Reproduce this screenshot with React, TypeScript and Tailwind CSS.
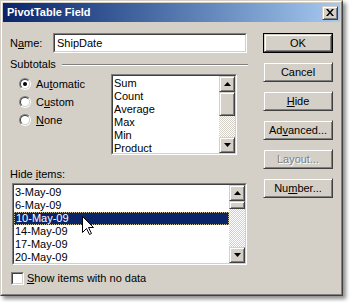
import type { ReactNode } from "react";

const raised =
  "border border-t-[#d4d0c8] border-l-[#d4d0c8] border-r-[#404040] border-b-[#404040] shadow-[inset_1px_1px_0_#ffffff,inset_-1px_-1px_0_#808080]";

function U({ children }: { children: ReactNode }) {
  return <span className="underline underline-offset-[1px]">{children}</span>;
}

function Btn({ children, def, disabled }: { children: ReactNode; def?: boolean; disabled?: boolean }) {
  const inner = (
    <div
      className={`flex h-full w-full items-center justify-center bg-[#d4d0c8] ${raised} ${
        disabled ? "text-[#808080] [text-shadow:1px_1px_0_#ffffff]" : "text-black"
      }`}
    >
      {children}
    </div>
  );
  if (def) return <div className="h-[20px] w-[70px] border border-black">{inner}</div>;
  return <div className="h-[20px] w-[70px]">{inner}</div>;
}

function Arrow({ up }: { up?: boolean }) {
  return (
    <div className={`flex h-[16px] w-[16px] items-center justify-center bg-[#d4d0c8] ${raised}`}>
      <svg width="7" height="4" viewBox="0 0 7 4">
        {up ? <path d="M3.5 0 L7 4 L0 4 Z" fill="#000" /> : <path d="M0 0 L7 0 L3.5 4 Z" fill="#000" />}
      </svg>
    </div>
  );
}

function ScrollBar({ thumb }: { thumb: number }) {
  return (
    <div className="flex h-full w-[16px] flex-col">
      <Arrow up />
      <div className={`w-[16px] bg-[#d4d0c8] ${raised}`} style={{ height: thumb }} />
      <div className="flex-1 bg-[image:repeating-conic-gradient(#d4d0c8_0_25%,#ffffff_0_50%)] bg-[length:2px_2px]" />
      <Arrow />
    </div>
  );
}

function ListBox({ items, sel, thumb, className }: { items: string[]; sel?: number; thumb: number; className: string }) {
  return (
    <div className={`border border-t-[#808080] border-l-[#808080] border-r-white border-b-white ${className}`}>
      <div className="flex h-full border border-t-[#404040] border-l-[#404040] border-r-[#d4d0c8] border-b-[#d4d0c8] bg-white">
        <div className="flex-1 overflow-hidden pt-[1px]">
          {items.map((t, i) => (
            <div
              key={t}
              className={`flex h-[13px] items-center pl-[1px] leading-[13px] ${
                i === sel ? "border border-dotted border-[#c8c0a0] bg-[#0a246a] pl-0 text-white" : "text-black"
              }`}
            >
              {t}
            </div>
          ))}
        </div>
        <ScrollBar thumb={thumb} />
      </div>
    </div>
  );
}

function Radio({ checked, children }: { checked?: boolean; children: ReactNode }) {
  return (
    <div className="flex h-[18px] items-center gap-[5px]">
      <div className="h-[12px] w-[12px] rounded-full border border-t-[#808080] border-l-[#808080] border-r-white border-b-white">
        <div className="flex h-full w-full items-center justify-center rounded-full border border-t-[#404040] border-l-[#404040] border-r-[#d4d0c8] border-b-[#d4d0c8] bg-white">
          {checked && <div className="h-[4px] w-[4px] rounded-full bg-black" />}
        </div>
      </div>
      <span>{children}</span>
    </div>
  );
}

export default function App() {
  return (
    <div className="h-[302px] w-[350px] bg-white font-['Liberation_Sans',Arial,sans-serif] text-[11px] text-black">
      <div className="relative h-[296px] w-[343px] border border-t-[#d4d0c8] border-l-[#d4d0c8] border-r-[#404040] border-b-[#404040] bg-[#d4d0c8] shadow-[3px_3px_4px_rgba(0,0,0,0.45)]">
        <div className="h-full border border-t-white border-l-white border-r-[#808080] border-b-[#808080] p-[1px]">
          <div className="flex h-[19px] items-center justify-between bg-gradient-to-r from-[#0a246a] to-[#a6caf0] pl-[4px] pr-[2px]">
            <span className="font-bold text-white">PivotTable Field</span>
            <div className={`flex h-[14px] w-[16px] items-center justify-center bg-[#d4d0c8] ${raised}`}>
              <svg width="8" height="7" viewBox="0 0 8 7">
                <path d="M0 0 L2 0 L4 2.5 L6 0 L8 0 L5 3.5 L8 7 L6 7 L4 4.5 L2 7 L0 7 L3 3.5 Z" fill="#000" />
              </svg>
            </div>
          </div>

          <div className="flex gap-[15px] pl-[7px]">
            <div className="flex w-[238px] flex-col">
              <div className="mt-[11px] flex h-[20px] items-center">
                <span className="w-[43px]">
                  N<U>a</U>me:
                </span>
                <div className="h-[20px] w-[194px] border border-t-[#808080] border-l-[#808080] border-r-white border-b-white">
                  <div className="flex h-full items-center border border-t-[#404040] border-l-[#404040] border-r-[#d4d0c8] border-b-[#d4d0c8] bg-white pl-[2px]">
                    ShipDate
                  </div>
                </div>
              </div>

              <div className="mt-[5px] flex h-[13px] items-center">
                <span>Subtotals</span>
                <div className="ml-[6px] h-[2px] flex-1 border-t border-b border-t-[#808080] border-b-white" />
              </div>

              <div className="mt-[3px] flex">
                <div className="w-[101px] pl-[9px] pt-[1px]">
                  <Radio checked>
                    Au<U>t</U>omatic
                  </Radio>
                  <Radio>
                    C<U>u</U>stom
                  </Radio>
                  <Radio>
                    <U>N</U>one
                  </Radio>
                </div>
                <ListBox
                  className="h-[81px] w-[126px]"
                  items={["Sum", "Count", "Average", "Max", "Min", "Product"]}
                  thumb={24}
                />
              </div>

              <div className="mt-[13px] flex h-[13px] items-center">
                <span>
                  Hide <U>i</U>tems:
                </span>
              </div>

              <div className="relative mt-[2px] ml-[2px]">
                <ListBox
                  className="h-[82px] w-[235px]"
                  items={["3-May-09", "6-May-09", "10-May-09", "14-May-09", "17-May-09", "20-May-09"]}
                  sel={2}
                  thumb={8}
                />
                <svg className="absolute left-[70px] top-[33px]" width="13" height="20" viewBox="0 0 13 20">
                  <path
                    d="M0.5 0.5 L0.5 16.5 L4.5 12.5 L7.5 18.5 L9.5 17.5 L6.5 11.5 L11.5 11.5 Z"
                    fill="#fff"
                    stroke="#000"
                    strokeWidth="1"
                    strokeLinejoin="miter"
                  />
                </svg>
              </div>

              <div className="mt-[7px] flex h-[13px] items-center gap-[3px] pl-[1px]">
                <div className="h-[13px] w-[13px] border border-t-[#808080] border-l-[#808080] border-r-white border-b-white">
                  <div className="h-full w-full border border-t-[#404040] border-l-[#404040] border-r-[#d4d0c8] border-b-[#d4d0c8] bg-white" />
                </div>
                <span>
                  <U>S</U>how items with no data
                </span>
              </div>
            </div>

            <div className="mt-[11px] flex flex-col gap-[9px]">
              <Btn def>OK</Btn>
              <Btn>Cancel</Btn>
              <Btn>
                <U>H</U>ide
              </Btn>
              <Btn>
                Ad<U>v</U>anced...
              </Btn>
              <Btn disabled>Layout...</Btn>
              <Btn>
                Nu<U>m</U>ber...
              </Btn>
            </div>
          </div>
        </div>
      </div>
    </div>
  );
}
